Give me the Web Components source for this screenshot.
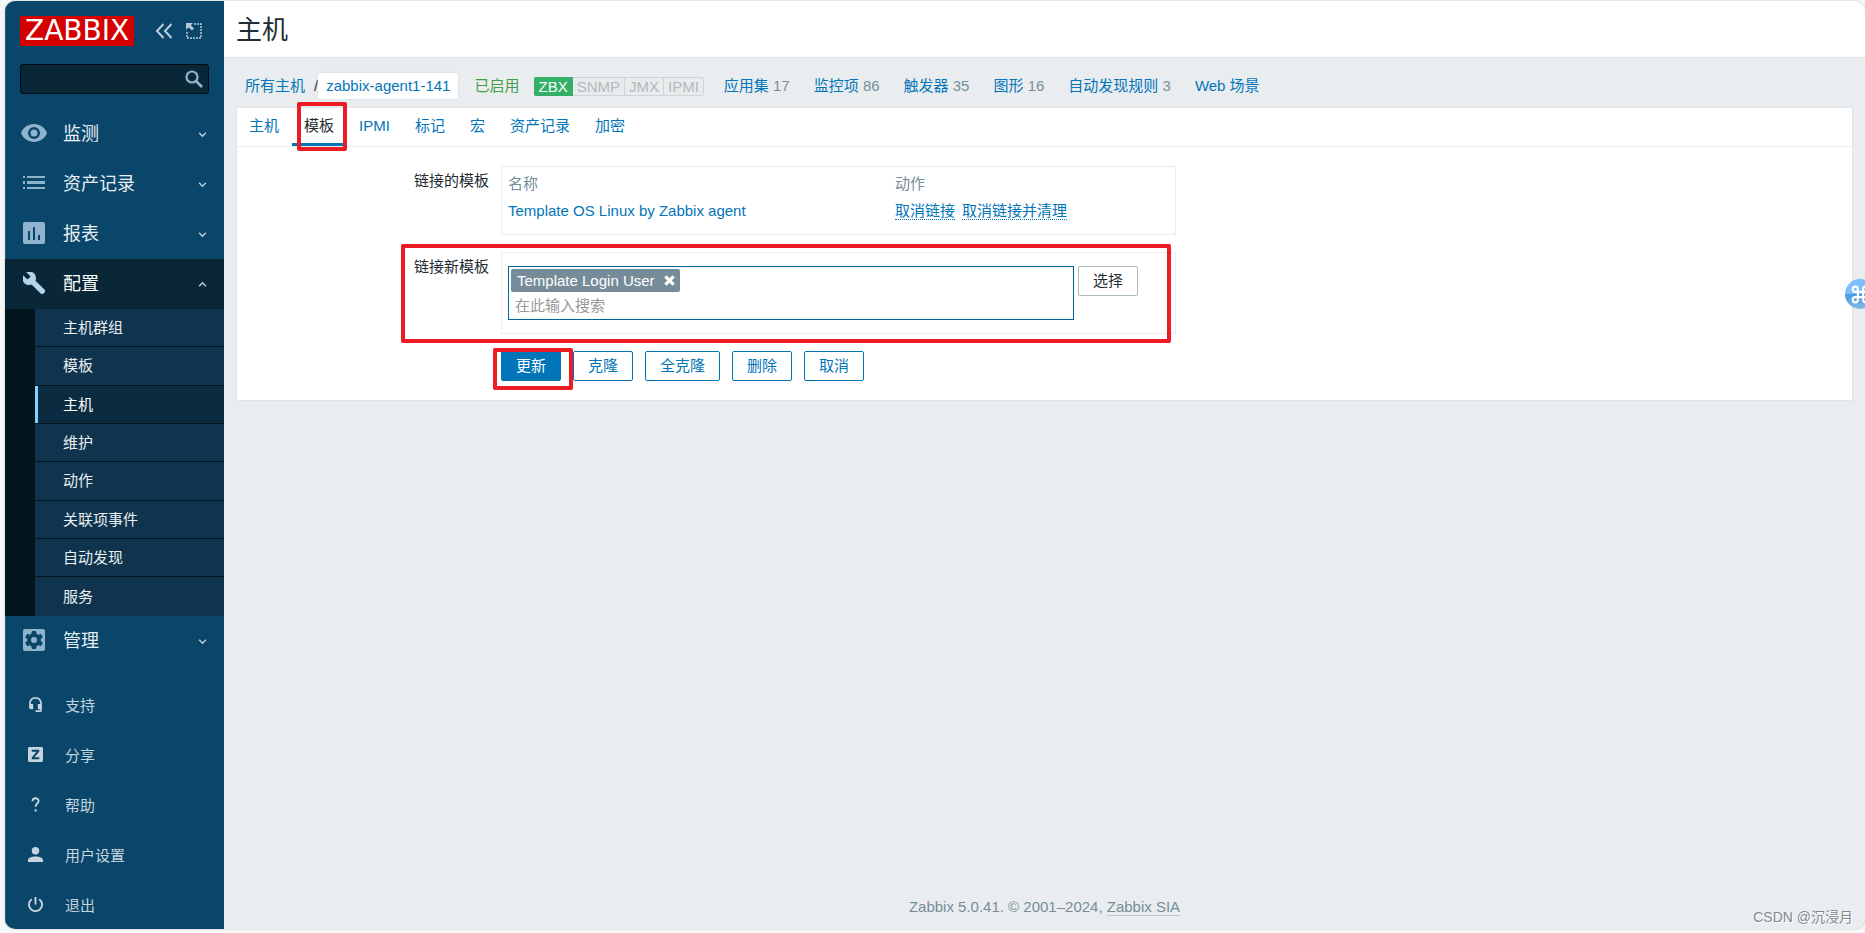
<!DOCTYPE html>
<html lang="zh-CN">
<head>
<meta charset="utf-8">
<title>主机</title>
<style>
  html, body { margin: 0; height: 100%; }
  body {
    background: #f6f7f7;
    color: #1f2c33;
    font: 15px/20px "Liberation Sans", "Noto Sans CJK SC", sans-serif;
    overflow: hidden;
  }
</style>
</head>
<body>
<zbx-app>
  <zbx-sidebar slot="side"></zbx-sidebar>
  <zbx-title slot="head">主机</zbx-title>
  <zbx-host-nav></zbx-host-nav>
  <zbx-panel>
    <zbx-tabs slot="tabs"></zbx-tabs>
    <zbx-template-form></zbx-template-form>
  </zbx-panel>
  <zbx-footer slot="foot"></zbx-footer>
  <float-key slot="float"></float-key>
  <span slot="stamp">CSDN @沉浸月</span>
</zbx-app>

<script>
(function () {
  /* define an element from its shadow markup */
  function define(name, html) {
    const tpl = document.createElement('template');
    tpl.innerHTML = html;
    customElements.define(name, class extends HTMLElement {
      constructor() {
        super();
        this.attachShadow({ mode: 'open' });
        this.shadowRoot.appendChild(tpl.content.cloneNode(true));
      }
    });
  }

  /* ---- icons ---- */
  const ICONS = {
    eye: ['0 0 28 20', '<path fill="currentColor" fill-rule="evenodd" d="M14 1C8 1 3 4.500 1 10c2 5.500 7 9 13 9s11-3.500 13-9C25 4.500 20 1 14 1zm0 15a6 6 0 1 1 0-12 6 6 0 0 1 0 12zm0-2.500a3.500 3.500 0 1 0 0-7 3.500 3.500 0 0 0 0 7z"/>'],
    list: ['0 0 28 20', '<path fill="currentColor" d="M3 3h2v2H3zm4 0h18v2H7zM3 8h2v3H3zm4 0h18v3H7zM3 14h2v2H3zm4 0h18v2H7z"/>'],
    report: ['0 0 28 28', '<path fill="currentColor" fill-rule="evenodd" d="M5 3h18q2 0 2 2v18q0 2-2 2H5q-2 0-2-2V5q0-2 2-2zm3 9v9h2v-9zm5-4v13h2V8zm5 8v5h2v-5z"/>'],
    wrench: ['2 2 22 22', '<path fill="currentColor" d="M24.200 20.300 14.500 10.700c1-2.500.4-5.400-1.600-7.400-2.100-2.100-5.300-2.500-7.800-1.300l4.500 4.500-3.100 3.100L1.900 5.100C.6 7.600 1.100 10.800 3.200 12.900c2 2 4.900 2.600 7.400 1.600l9.700 9.700c.4.4 1.100.4 1.500 0l2.400-2.400c.5-.4.5-1.100 0-1.500z"/>'],
    gear: ['0 0 28 28', '<path fill="currentColor" fill-rule="evenodd" d="M5 3h18q2 0 2 2v18q0 2-2 2H5q-2 0-2-2V5q0-2 2-2zm7 2-.6 2.700-1.700 1-2.600-.9-2 3.500L7.200 13v2l-2.100 1.700 2 3.500 2.600-.9 1.700 1L12 23h4l.6-2.700 1.700-1 2.600.9 2-3.500-2.100-1.700v-2l2.100-1.700-2-3.500-2.600.9-1.700-1L16 5zm2 6a3 3 0 1 1 0 6 3 3 0 0 1 0-6z"/>'],
    support: ['0 0 16 16', '<path fill="currentColor" d="M8 0C4.200 0 1.200 3 1.200 6.800V11q0 2 2 2H5.500V7.500H3V6.800C3 4 5.200 1.800 8 1.800S13 4 13 6.800v.7h-2.500V13H13v1H8v2h4.800q2 0 2-2V6.800C14.800 3 11.800 0 8 0z"/>'],
    share: ['0 0 16 16', '<path fill="currentColor" fill-rule="evenodd" d="M1.500 0h13q1.500 0 1.500 1.500v13q0 1.500-1.500 1.500h-13Q0 16 0 14.500v-13Q0 0 1.500 0zM4 3v2h5L4 11.300V13h8v-2H7l5-6.300V3z"/>'],
    help: ['0 0 16 16', '<path fill="none" stroke="currentColor" stroke-width="2" d="M4.800 4.500C4.800.3 11.300.4 11.300 4.200 11.300 7 8 7 8 10.500"/><path fill="currentColor" d="M7 13h2.200v2.500H7z"/>'],
    user: ['0 0 16 16', '<path fill="currentColor" d="M8 0a4 4 0 1 1 0 8 4 4 0 0 1 0-8zM0 16v-2c0-5 16-5 16 0v2z"/>'],
    power: ['0 0 16 16', '<path fill="none" stroke="currentColor" stroke-width="2" d="M8 0v8M4 2.300a7 7 0 1 0 8 0"/>'],
    search: ['0 0 18 18', '<circle cx="7" cy="7" r="5.500" fill="none" stroke="currentColor" stroke-width="2.200"/><path stroke="currentColor" stroke-width="2.600" d="m11 11 6 6"/>'],
    collapse: ['0 0 18 16', '<path fill="none" stroke="currentColor" stroke-width="2" d="M8.500 1 2 8l6.500 7M16.500 1 10 8l6.500 7"/>'],
    compact: ['0 0 16 16', '<path fill="none" stroke="currentColor" stroke-width="1.500" stroke-dasharray="2 1" d="M8 1h7v14H1V8"/><path fill="currentColor" d="M0 0h7L4.800 2.200 8 5.500 6 7.500 2.500 4.200 0 7z"/>'],
    down: ['0 0 8 8', '<path fill="none" stroke="currentColor" stroke-width="1.200" d="m1 2.500 3 3 3-3"/>'],
    up: ['0 0 8 8', '<path fill="none" stroke="currentColor" stroke-width="1.200" d="m1 5.500 3-3 3 3"/>'],
    cross: ['0 0 12 12', '<path stroke="currentColor" stroke-width="3.400" d="m1.500 1.500 9 9m0-9-9 9"/>'],
    command: ['0 0 24 24', '<path fill="none" stroke="currentColor" stroke-width="2.400" d="M9 9h6v6H9zM9 9H6a3 3 0 1 1 3-3zm6 0V6a3 3 0 1 1 3 3zm0 6h3a3 3 0 1 1-3 3zm-6 0v3a3 3 0 1 1-3-3z"/>']
  };

  customElements.define('zbx-icon', class extends HTMLElement {
    connectedCallback() {
      if (this.shadowRoot) return;
      const [box, body] = ICONS[this.getAttribute('name')];
      this.attachShadow({ mode: 'open' }).innerHTML = `
        <style>
          :host { display: inline-block; flex: none; line-height: 0; }
          svg { width: 100%; height: 100%; display: block; }
        </style>
        <svg viewBox="${box}" aria-hidden="true">${body}</svg>`;
    }
  });

  /* red frame laid over the part it points at */
  define('red-frame', `
    <style>
      :host {
        position: absolute;
        box-sizing: border-box;
        border: 4px solid #ed1c24;
        border-radius: 2px;
        pointer-events: none;
        z-index: 2;
      }
    </style>`);

  /* ---- sidebar ---- */
  customElements.define('zbx-menu-item', class extends HTMLElement {
    connectedCallback() {
      if (this.shadowRoot) return;
      const open = this.hasAttribute('open');
      this.attachShadow({ mode: 'open' }).innerHTML = `
        <style>
          :host { display: block; }
          a {
            display: flex; align-items: center; height: 50px; box-sizing: border-box;
            padding: 0 17px 0 15px; color: #e6eef3; font-size: 18px; text-decoration: none;
          }
          .pic { width: 28px; height: 28px; margin: 0 15px 3px 0; color: #8fb3cd; }
          .text { flex: 1; }
          .arrow { width: 9px; height: 9px; color: #bdd0dc; }
          :host([open]) a { background: #0a2738; color: #fff; }
          :host([open]) .pic { width: 22px; height: 22px; margin: 0 18px 3px 3px; color: #b5d4ea; }
          ul {
            display: grid; grid-auto-rows: 38px 39px 38px;
            margin: 0; padding: 0 0 0 30px; list-style: none;
            background: #03151f;
          }
        </style>
        <a href="#"><zbx-icon class="pic" name="${this.getAttribute('icon')}"></zbx-icon>
          <span class="text">${this.getAttribute('label')}</span>
          <zbx-icon class="arrow" name="${open ? 'up' : 'down'}"></zbx-icon></a>
        ${open ? '<ul><slot></slot></ul>' : ''}`;
    }
  });

  define('zbx-sub-item', `
    <style>
      :host { display: flex; box-sizing: border-box; border-bottom: 1px solid #03151f; background: #10344d; }
      :host(:last-child) { border-bottom: 0; }
      a {
        flex: 1; display: flex; align-items: center; padding-left: 28px;
        color: #e9f0f4; text-decoration: none;
      }
      :host([selected]) { background: #0b2c40; }
      :host([selected]) a { padding-left: 25px; border-left: 3px solid #88ceff; color: #fff; }
    </style>
    <a href="#"><slot></slot></a>`);

  define('zbx-sidebar', `
    <style>
      :host { display: flex; flex-direction: column; background: #0a466a; box-shadow: inset 1px 0 #305f7b; }
      header { display: flex; align-items: center; padding: 15px 22px 18px 15px; }
      .logo {
        margin-right: auto; padding: 0 5px; background: #d40000; color: #fff;
        font: 28px/30px "DejaVu Sans", sans-serif; text-decoration: none;
      }
      button { padding: 0; border: 0; background: none; color: #b8cbd8; line-height: 0; }
      .collapse { margin-right: 13px; }
      .collapse zbx-icon { width: 18px; height: 16px; }
      .compact zbx-icon { width: 16px; height: 16px; }
      form {
        display: flex; align-items: center; height: 30px; box-sizing: border-box;
        margin: 0 15px 15px; padding-right: 5px;
        background: #0a2738; border: 1px solid #000c14; border-radius: 3px;
      }
      input { flex: 1; min-width: 0; padding: 0 8px; border: 0; background: none; color: #fff; font: inherit; }
      form zbx-icon { width: 18px; height: 18px; color: #8fb3cd; }
      ul { margin: auto 0 0; padding: 0; list-style: none; }
      li a {
        display: flex; align-items: center; height: 50px; box-sizing: border-box;
        padding: 3px 0 0 23px; color: #c5d4de; text-decoration: none;
      }
      li zbx-icon { width: 15px; height: 15px; margin: 0 22px 3px 0; }
    </style>
    <header>
      <a class="logo" href="#">ZABBIX</a>
      <button class="collapse" aria-label="collapse"><zbx-icon name="collapse"></zbx-icon></button>
      <button class="compact" aria-label="hide"><zbx-icon name="compact"></zbx-icon></button>
    </header>
    <form role="search">
      <input type="text" aria-label="search">
      <button type="button" aria-label="submit"><zbx-icon name="search"></zbx-icon></button>
    </form>
    <nav>
      <zbx-menu-item icon="eye" label="监测"></zbx-menu-item>
      <zbx-menu-item icon="list" label="资产记录"></zbx-menu-item>
      <zbx-menu-item icon="report" label="报表"></zbx-menu-item>
      <zbx-menu-item icon="wrench" label="配置" open>
        <zbx-sub-item>主机群组</zbx-sub-item>
        <zbx-sub-item>模板</zbx-sub-item>
        <zbx-sub-item selected>主机</zbx-sub-item>
        <zbx-sub-item>维护</zbx-sub-item>
        <zbx-sub-item>动作</zbx-sub-item>
        <zbx-sub-item>关联项事件</zbx-sub-item>
        <zbx-sub-item>自动发现</zbx-sub-item>
        <zbx-sub-item>服务</zbx-sub-item>
      </zbx-menu-item>
      <zbx-menu-item icon="gear" label="管理"></zbx-menu-item>
    </nav>
    <ul>
      <li><a href="#"><zbx-icon name="support"></zbx-icon>支持</a></li>
      <li><a href="#"><zbx-icon name="share"></zbx-icon>分享</a></li>
      <li><a href="#"><zbx-icon name="help"></zbx-icon>帮助</a></li>
      <li><a href="#"><zbx-icon name="user"></zbx-icon>用户设置</a></li>
      <li><a href="#"><zbx-icon name="power"></zbx-icon>退出</a></li>
    </ul>`);

  /* ---- page frame ---- */
  define('zbx-app', `
    <style>
      :host { display: block; box-sizing: border-box; height: 100%; padding: 1px 0 4px 5px; }
      .window {
        position: relative; display: grid; grid-template-columns: 219px 1fr;
        min-height: 100%; overflow: hidden;
        background: #e9edf0; border-radius: 10px; box-shadow: 0 0 2px #b4b8ba;
      }
      .page { display: flex; flex-direction: column; min-width: 0; }
      main { flex: 1; padding: 15px 12px 0; }
      .float { position: absolute; right: -10px; top: 278px; }
      .stamp {
        position: absolute; right: 12px; bottom: 2px;
        color: #85898c; font-size: 14px; text-shadow: 1px 1px #fff;
      }
    </style>
    <div class="window">
      <slot name="side"></slot>
      <div class="page">
        <slot name="head"></slot>
        <main><slot></slot></main>
        <slot name="foot"></slot>
      </div>
      <div class="float"><slot name="float"></slot></div>
      <div class="stamp"><slot name="stamp"></slot></div>
    </div>`);

  define('zbx-title', `
    <style>
      :host { display: block; background: #fff; border-bottom: 1px solid #dfe4e7; }
      h1 { margin: 0; padding: 2px 12px 0; font-size: 26px; font-weight: normal; line-height: 54px; }
    </style>
    <h1><slot></slot></h1>`);

  define('zbx-host-nav', `
    <style>
      :host { display: flex; flex-wrap: wrap; align-items: center; padding: 0 9px 8px; }
      a { color: #0275b8; text-decoration: none; }
      .slash { margin-left: 9px; }
      .host { padding: 3px 8px; background: #fff; border-radius: 2px; box-shadow: 0 0 2px #cdd3d7; }
      .status { margin: 0 15px 0 16px; color: #429e47; }
      .types { display: flex; margin-right: 20px; color: #acbbc2; line-height: 17px; }
      .types span { padding: 0 4px; background: #ebebeb; border: 1px solid #ccd5d9; border-left-width: 0; }
      .types .on { background: #34af67; border-color: #34af67; color: #fff; border-radius: 2px 0 0 2px; }
      .types span:last-child { border-radius: 0 2px 2px 0; }
      .links { display: flex; gap: 24px; color: #768d99; }
    </style>
    <a href="#">所有主机</a><span class="slash">/</span>
    <a class="host" href="#">zabbix-agent1-141</a>
    <span class="status">已启用</span>
    <div class="types"><span class="on">ZBX</span><span>SNMP</span><span>JMX</span><span>IPMI</span></div>
    <div class="links">
      <span><a href="#">应用集</a> 17</span>
      <span><a href="#">监控项</a> 86</span>
      <span><a href="#">触发器</a> 35</span>
      <span><a href="#">图形</a> 16</span>
      <span><a href="#">自动发现规则</a> 3</span>
      <a href="#">Web 场景</a>
    </div>`);

  define('zbx-panel', `
    <style>
      :host { display: block; background: #fff; border: 1px solid #dfe4e7; }
    </style>
    <slot name="tabs"></slot>
    <slot></slot>`);

  define('zbx-tabs', `
    <style>
      :host { display: block; border-bottom: 1px solid #e9edf0; }
      ul { display: flex; gap: 1px; margin: 0; padding: 0; list-style: none; }
      li { position: relative; }
      a {
        display: block; padding: 8px 12px 7px; border-bottom: 3px solid transparent;
        color: #0275b8; text-decoration: none;
      }
      .on { color: #1f2c33; border-color: #0275b8; }
      red-frame { inset: -6px -1px -5px 5px; }
    </style>
    <ul>
      <li><a href="#">主机</a></li>
      <li><a class="on" href="#">模板</a><red-frame></red-frame></li>
      <li><a href="#">IPMI</a></li>
      <li><a href="#">标记</a></li>
      <li><a href="#">宏</a></li>
      <li><a href="#">资产记录</a></li>
      <li><a href="#">加密</a></li>
    </ul>`);

  /* ---- linked templates form ---- */
  define('zbx-template-form', `
    <style>
      :host { display: block; padding: 19px 12px 19px 0; }
      .row { position: relative; display: grid; grid-template-columns: 252px minmax(0, 675px); column-gap: 12px; margin-bottom: 17px; }
      .name { padding-top: 5px; text-align: right; }
      .box { border: 1px solid #e9edf0; padding: 4px 6px 9px; }
      a { color: #0275b8; text-decoration: none; }
      table { width: 100%; table-layout: fixed; border-collapse: collapse; }
      th, td { padding: 3px 0 4px; text-align: left; font-weight: normal; }
      th { color: #768d99; }
      th:first-child { width: 387px; }
      td a + a { margin-left: 7px; }
      .dotted { border-bottom: 1px dotted #0275b8; }
      .pick { display: flex; align-items: flex-start; gap: 4px; padding: 13px 6px; }
      .multi { flex: 0 1 566px; min-width: 0; box-sizing: border-box; padding: 2px; border: 1px solid #00659a; }
      .chip {
        display: inline-flex; align-items: center; padding: 0 5px 0 6px;
        background: #768d99; border-radius: 2px; color: #fff; line-height: 23px;
      }
      .chip button { margin: 0 0 0 9px; padding: 0; border: 0; background: none; color: #fff; line-height: 0; }
      .chip zbx-icon { width: 11px; height: 11px; }
      input {
        display: block; width: 100%; height: 23px; box-sizing: border-box;
        margin-top: 2px; padding: 0 4px; border: 0; outline: 0; font: inherit; color: inherit;
      }
      input::placeholder { color: #999; opacity: 1; }
      .btn {
        height: 30px; padding: 0 14px; background: #fff; border: 1px solid #0275b8; border-radius: 2px;
        color: #0275b8; font: inherit;
      }
      .grey { border-color: #acbbc2; color: #1f2c33; }
      .main { background: #0275b8; color: #fff; }
      .actions { position: relative; display: flex; flex-wrap: wrap; gap: 12px; margin-left: 264px; }
      .row red-frame { left: 164px; right: auto; width: 770px; top: -8px; bottom: -9px; }
      .actions red-frame { left: -8px; top: -3px; width: 80px; height: 42px; }
    </style>
    <div class="row">
      <span class="name" id="linked">链接的模板</span>
      <div class="box">
        <table aria-labelledby="linked">
          <thead><tr><th>名称</th><th>动作</th></tr></thead>
          <tbody><tr>
            <td><a href="#">Template OS Linux by Zabbix agent</a></td>
            <td><a class="dotted" href="#">取消链接</a><a class="dotted" href="#">取消链接并清理</a></td>
          </tr></tbody>
        </table>
      </div>
    </div>
    <div class="row">
      <label class="name" for="add">链接新模板</label>
      <div class="box pick">
        <div class="multi">
          <span class="chip">Template Login User<button type="button" aria-label="remove"><zbx-icon name="cross"></zbx-icon></button></span>
          <input id="add" type="text" placeholder="在此输入搜索">
        </div>
        <button class="btn grey" type="button">选择</button>
      </div>
      <red-frame></red-frame>
    </div>
    <div class="actions">
      <button class="btn main">更新</button>
      <button class="btn">克隆</button>
      <button class="btn">全克隆</button>
      <button class="btn">删除</button>
      <button class="btn">取消</button>
      <red-frame></red-frame>
    </div>`);

  define('zbx-footer', `
    <style>
      :host { display: block; padding: 12px 12px; text-align: center; color: #768d99; }
      a { color: inherit; text-decoration: none; border-bottom: 1px solid #bdc8ce; }
    </style>
    Zabbix 5.0.41. © 2001–2024, <a href="#">Zabbix SIA</a>`);

  define('float-key', `
    <style>
      :host { display: block; }
      button {
        display: grid; place-items: center; width: 30px; height: 30px; padding: 0;
        border: 0; border-radius: 50%; color: #fff;
        background: linear-gradient(#7dbfff 50%, #4a98dc 50%, #83b9ea);
      }
      zbx-icon { width: 21px; height: 21px; }
    </style>
    <button aria-label="shortcuts"><zbx-icon name="command"></zbx-icon></button>`);
})();
</script>
</body>
</html>
